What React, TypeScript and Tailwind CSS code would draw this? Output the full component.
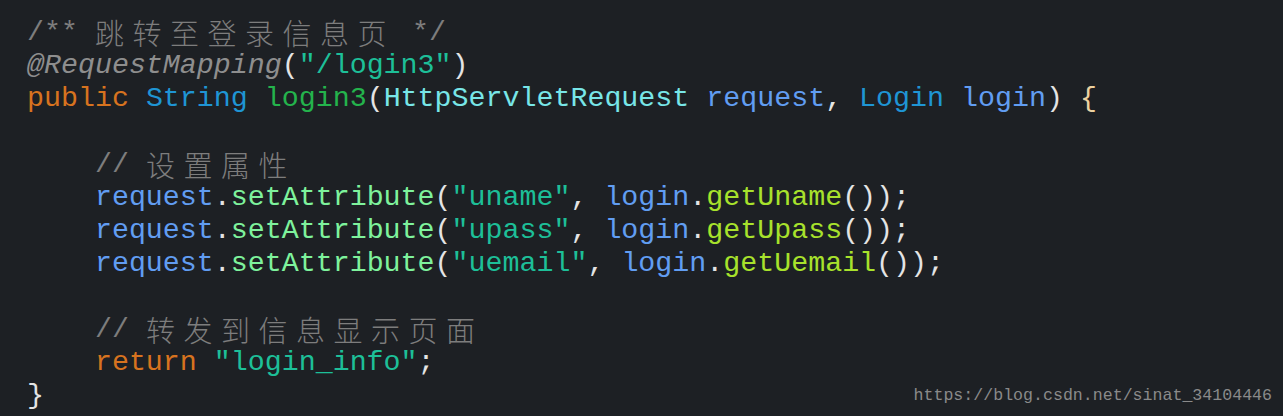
import React from 'react';

type Tok = [string, string];

const C = {
  cm: 'text-[#7d7d7d]',
  an: 'text-[#8e8e8e] italic',
  p: 'text-[#e4e4e4]',
  kw: 'text-[#d7731f]',
  ty: 'text-[#1f95d4]',
  fn: 'text-[#24b34c]',
  cls: 'text-[#78e6e8]',
  vr: 'text-[#619df2]',
  st: 'text-[#1dbf98]',
  set: 'text-[#7ef29c]',
  get: 'text-[#a8e22c]',
  br: 'text-[#ecd2a0]',
};

// CJK chars take 37.5px cells in the picture, wider than two ascii columns
const isCjk = (s: string) => /[\u4e00-\u9fff]/.test(s);

function Chunk({ text, cls }: { text: string; cls: string }) {
  const parts = text.split(/([\u4e00-\u9fff]+)/).filter(Boolean);
  return (
    <span className={cls}>
      {parts.map((p, i) =>
        isCjk(p) ? (
          <span
            key={i}
            className="inline-block align-top h-[33px] leading-[33px] text-[29px] tracking-[8.5px] font-light"
            style={{ fontFamily: '"Noto Sans CJK SC", sans-serif' }}
          >
            {p}
          </span>
        ) : (
          <span key={i}>{p}</span>
        )
      )}
    </span>
  );
}

const lines: Tok[][] = [
  [['/** 跳转至登录信息页 */', C.cm]],
  [['@RequestMapping', C.an], ['(', C.p], ['"/login3"', C.st], [')', C.p]],
  [
    ['public', C.kw], [' ', C.p], ['String', C.ty], [' ', C.p], ['login3', C.fn], ['(', C.p],
    ['HttpServletRequest', C.cls], [' ', C.p], ['request', C.vr], [', ', C.p], ['Login', C.ty],
    [' ', C.p], ['login', C.vr], [') ', C.p], ['{', C.br],
  ],
  [],
  [['    // 设置属性', C.cm]],
  [['    request', C.vr], ['.', C.p], ['setAttribute', C.set], ['(', C.p], ['"uname"', C.st], [', ', C.p], ['login', C.vr], ['.', C.p], ['getUname', C.get], ['());', C.p]],
  [['    request', C.vr], ['.', C.p], ['setAttribute', C.set], ['(', C.p], ['"upass"', C.st], [', ', C.p], ['login', C.vr], ['.', C.p], ['getUpass', C.get], ['());', C.p]],
  [['    request', C.vr], ['.', C.p], ['setAttribute', C.set], ['(', C.p], ['"uemail"', C.st], [', ', C.p], ['login', C.vr], ['.', C.p], ['getUemail', C.get], ['());', C.p]],
  [],
  [['    // 转发到信息显示页面', C.cm]],
  [['    return', C.kw], [' ', C.p], ['"login_info"', C.st], [';', C.p]],
];

export default function App() {
  return (
    <div
      className="w-[1283px] h-[416px] overflow-hidden bg-[#1d2024] pt-[16px] pl-[27px] pr-[11px]"
      style={{ fontFamily: '"Liberation Mono", "Noto Sans CJK SC", monospace' }}
    >
      {lines.map((line, i) => (
        <div key={i} className="h-[33px] leading-[33px] text-[28.3px] whitespace-pre">
          {line.map(([t, c], j) => (
            <Chunk key={j} text={t} cls={c} />
          ))}
        </div>
      ))}
      <div className="flex items-center h-[33px] whitespace-pre">
        <span className="text-[28.3px] leading-[33px] text-[#e4e4e4]">{'}'}</span>
        <span className="ml-auto text-[16.6px] text-[#8a8a8a] pt-[2px]">
          https://blog.csdn.net/sinat_34104446
        </span>
      </div>
    </div>
  );
}
